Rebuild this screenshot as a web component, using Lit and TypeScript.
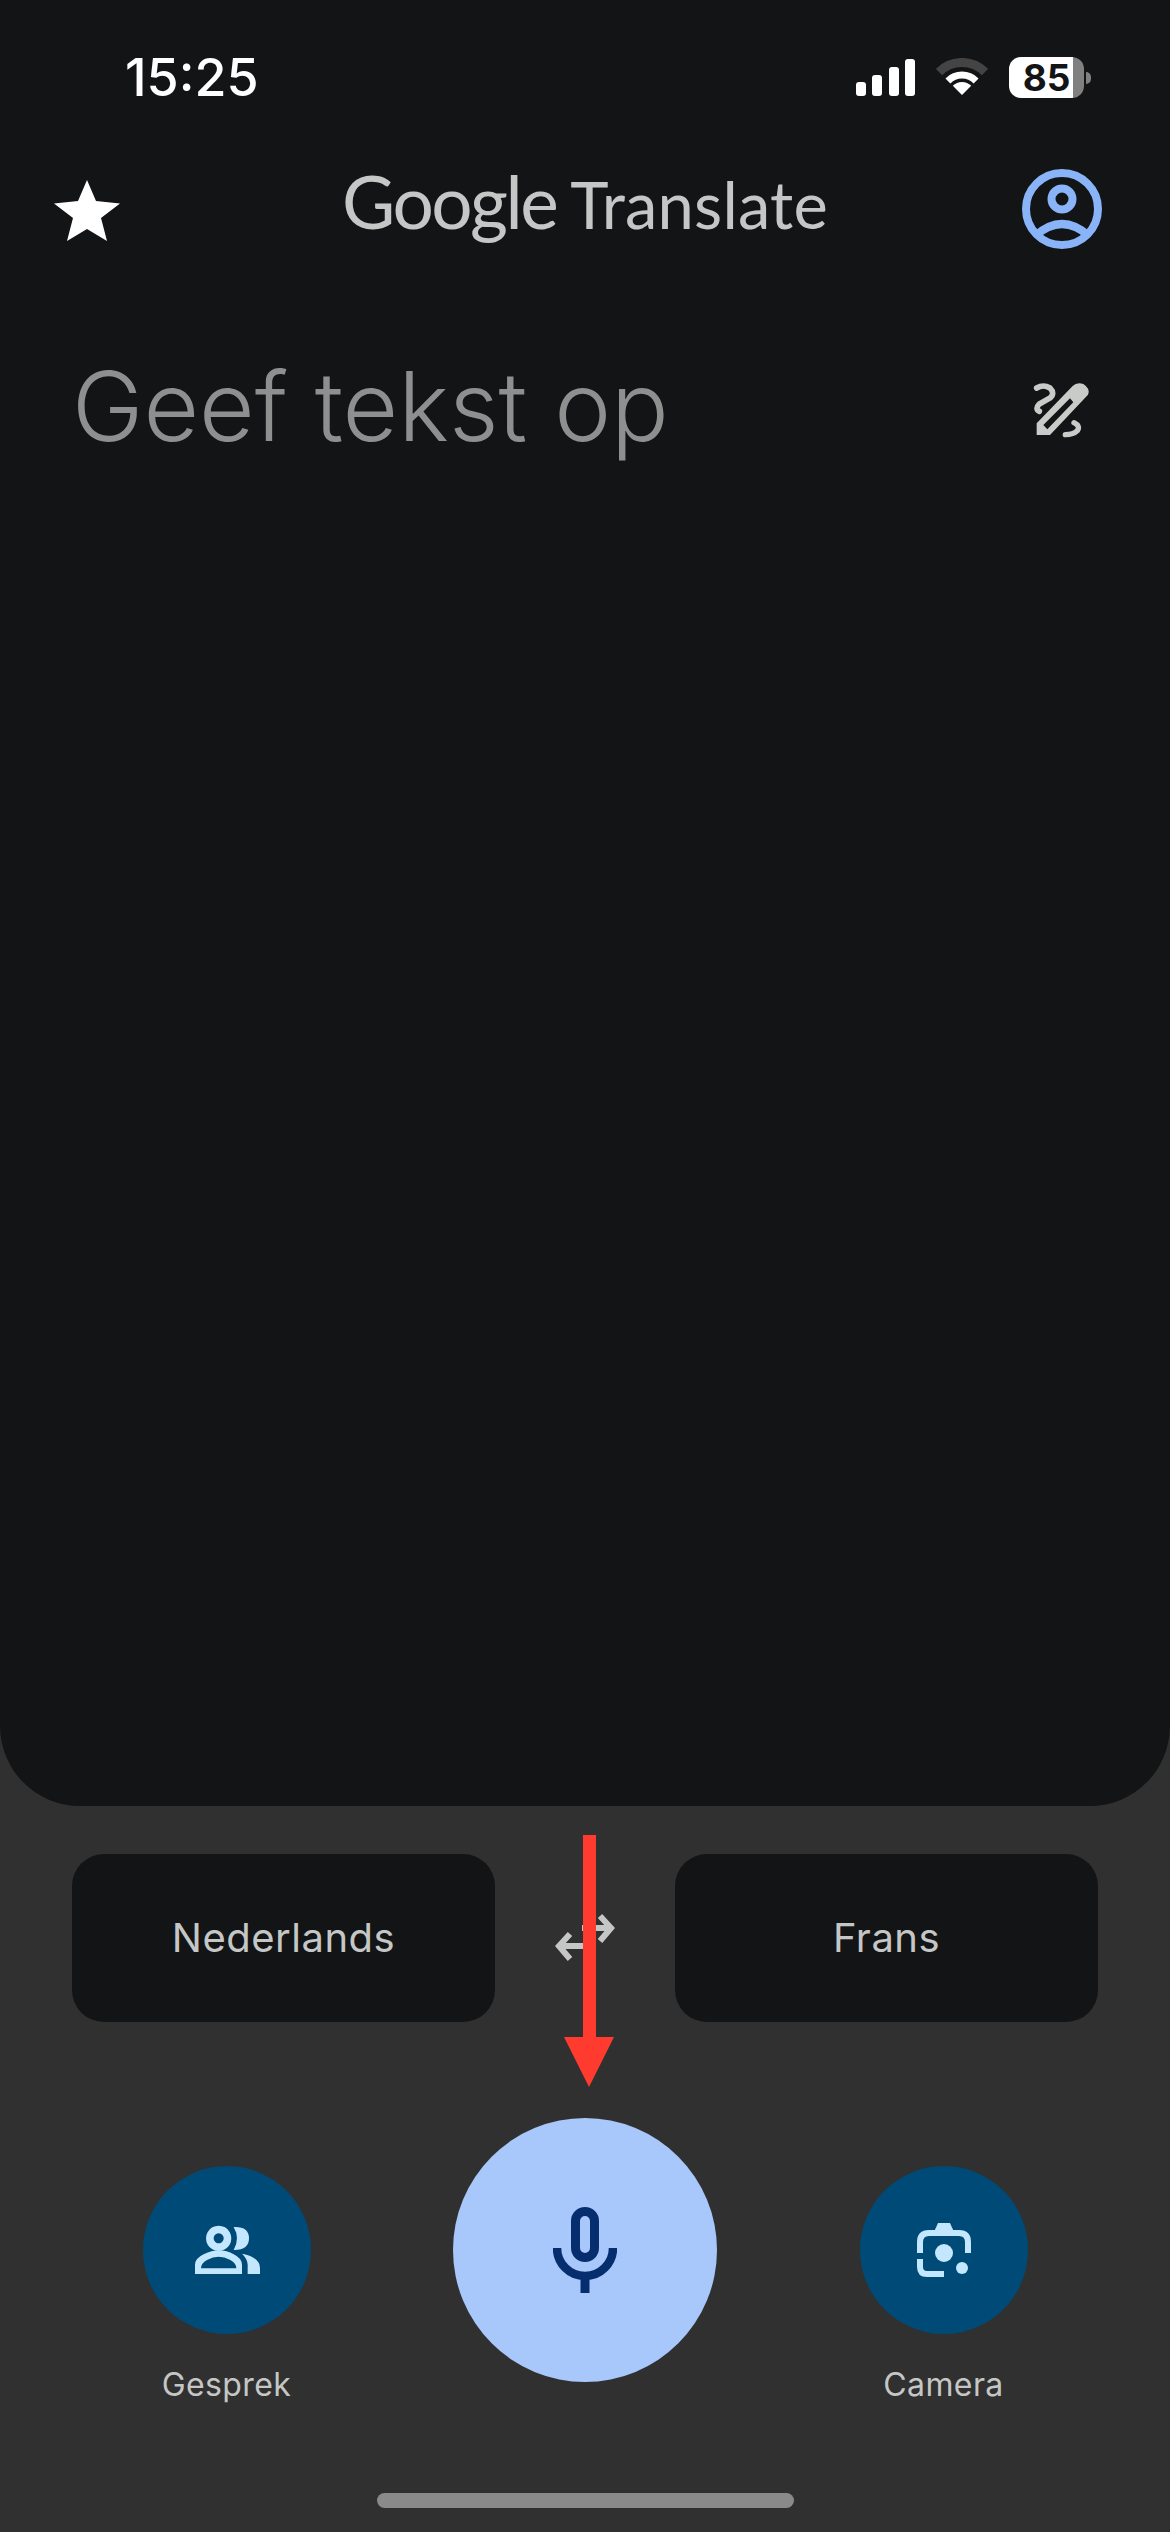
import { LitElement, css, html, svg } from "lit";
import { customElement, property } from "lit/decorators.js";

const starIcon = svg`<polygon fill="#fff" points="33,0 42,21 66,23.5 47,38 53,61 33,49 13,61 19,38 0,23.5 24,21" />`;

const wifiIcon = svg`
  <path d="M3 14A32.5 32.5 0 0 1 49 14" fill="none" stroke="#444" stroke-width="9" />
  <path d="M11.9 22.9A20 20 0 0 1 40.1 22.9" fill="none" stroke="#fff" stroke-width="7" />
  <path d="M26 37L16.8 27.8A13 13 0 0 1 35.2 27.8Z" fill="#fff" />
`;

const penIcon = svg`
  <path fill="#c9cbc9" fill-rule="evenodd" d="M50 160L158 48Q170 36 190 42Q212 56 204 74L90 195H50ZM70 165L82 178L160 97L150 85Z" />
  <path fill="none" stroke="#c9cbc9" stroke-width="17" stroke-linecap="round" d="M50 54Q70 42 90 54Q106 70 90 84L58 102Q44 116 58 124" />
  <path fill="none" stroke="#c9cbc9" stroke-width="16" stroke-linecap="round" d="M162 158Q182 168 172 182Q160 194 136 194" />
`;

const swapIcon = svg`
  <g fill="none" stroke="#c4c7c5" stroke-width="6">
    <path d="M29 33H6M16 21L5 33L16 46" />
    <path d="M28 15H56M46 3L57 15L46 28" />
  </g>
`;

const peopleIcon = svg`
  <g fill="#c2e7ff">
    <path fill-rule="evenodd" d="M95 32a38 38 0 1 0 .01 0ZM95 55a15 15 0 1 1-.01 0Z" />
    <path d="M140 36Q186 34 186 70Q186 106 140 105Q160 70 140 36Z" />
    <path fill-rule="evenodd" d="M24 177V150Q24 130 50 118Q75 106 95 106Q120 106 140 118Q165 130 165 150V177ZM42 160H148Q148 145 130 135Q112 125 95 125Q78 125 60 135Q42 145 42 160Z" />
    <path d="M165 116Q219 126 219 160V177H182V150Q182 132 165 116Z" />
  </g>
`;

const cameraIcon = svg`
  <g fill="none" stroke="#c2e7ff" stroke-width="6">
    <path d="M3 30V19Q3 10 12 10H42Q51 10 51 19V30" />
    <path d="M3 36V44Q3 51 10 51H27" />
  </g>
  <g fill="#c2e7ff">
    <path d="M17 9L21 0H33L37 9Z" />
    <circle cx="27" cy="30" r="9" />
    <circle cx="45" cy="45" r="6" />
  </g>
`;

@customElement("action-button")
export class ActionButton extends LitElement {
  @property() label = "";

  render() {
    return html`
      <div class="circle"><slot></slot></div>
      <div class="label">${this.label}</div>
    `;
  }

  static styles = css`
    :host {
      display: flex;
      flex-direction: column;
      align-items: center;
      width: 240px;
      margin-top: 48px;
    }

    .circle {
      display: flex;
      align-items: center;
      justify-content: center;
      width: 168px;
      height: 168px;
      border-radius: 50%;
      background: #004a77;
    }

    .label {
      margin-top: 31px;
      font: 400 32px/40px Inter, sans-serif;
      letter-spacing: 0.4px;
      color: #c4c7c5;
    }
  `;
}

@customElement("app-root")
export class AppRoot extends LitElement {
  @property({ type: Number }) battery = 85;

  render() {
    return html`
      <div class="panel">
        <div class="status">
          <div class="time">15:25</div>
          <div class="indicators">
            <div class="signal">
              ${[14, 21, 29, 37].map(
                (h) => html`<span class="bar" style="height: ${h}px"></span>`
              )}
            </div>
            <svg width="52" height="40" viewBox="0 0 52 40">${wifiIcon}</svg>
            <div class="battery">
              <div
                class="cell"
                style="background: linear-gradient(90deg, #fff ${this.battery}%, #808080 ${this.battery}%)"
              >
                ${this.battery}
              </div>
              <div class="cap"></div>
            </div>
          </div>
        </div>

        <div class="header">
          <svg class="star" width="66" height="62" viewBox="0 0 66 62">${starIcon}</svg>
          <div class="logo"><span class="google">Google</span><span class="translate">Translate</span></div>
          <svg class="avatar" width="80" height="80" viewBox="0 0 80 80">
            <g fill="none" stroke="#8ab4f8" stroke-width="8">
              <circle cx="40" cy="40" r="36" />
              <circle cx="40" cy="30" r="10.5" />
              <path d="M13 67Q40 43 67 67" />
            </g>
          </svg>
        </div>

        <div class="input">
          <div class="placeholder">Geef tekst op</div>
          <svg width="80" height="80" viewBox="0 0 240 240">${penIcon}</svg>
        </div>
      </div>

      <div class="languages">
        <div class="lang">Nederlands</div>
        <svg width="62" height="50" viewBox="0 0 62 50">${swapIcon}</svg>
        <div class="lang">Frans</div>
      </div>

      <div class="actions">
        <action-button label="Gesprek">
          <svg width="80" height="70" viewBox="0 0 240 210">${peopleIcon}</svg>
        </action-button>
        <div class="mic">
          <svg width="64" height="86" viewBox="0 0 64 86">
            <g fill="none" stroke="#062e6f">
              <rect x="22.5" y="4.5" width="19" height="46" rx="9.5" stroke-width="9" />
              <path d="M4 41A28 28 0 0 0 60 41" stroke-width="8.5" />
            </g>
            <rect x="27.5" y="70" width="9" height="16" fill="#062e6f" />
          </svg>
        </div>
        <action-button label="Camera">
          <svg width="54" height="54" viewBox="0 0 54 54">${cameraIcon}</svg>
        </action-button>
      </div>

      <div class="home"></div>

      <svg class="annotation" width="50" height="252" viewBox="0 0 50 252">
        <rect x="19" y="0" width="13" height="204" fill="#ff3b30" />
        <polygon points="0,202 50,202 25,252" fill="#ff3b30" />
      </svg>
    `;
  }

  static styles = css`
    :host {
      display: flex;
      flex-direction: column;
      position: relative;
      width: 1170px;
      height: 2532px;
      overflow: hidden;
      background: #303030;
    }

    .panel {
      height: 1806px;
      flex: none;
      box-sizing: border-box;
      padding-top: 57px;
      border-radius: 0 0 80px 80px;
      background: #131416;
    }

    .status {
      display: flex;
      align-items: center;
      justify-content: space-between;
      height: 41px;
      padding: 0 79px 0 125px;
    }

    .time {
      font: 500 52px/43px Inter, sans-serif;
      color: #fff;
    }

    .indicators {
      display: flex;
      align-items: center;
      gap: 21px;
    }

    .signal {
      display: flex;
      align-items: flex-end;
      gap: 6.5px;
      height: 37px;
    }

    .bar {
      width: 10px;
      border-radius: 3px;
      background: #fff;
    }

    .battery {
      display: flex;
      align-items: center;
      gap: 2px;
    }

    .cell {
      display: flex;
      align-items: center;
      justify-content: center;
      width: 75px;
      height: 41px;
      border-radius: 12px;
      font: 700 37px/41px Inter, sans-serif;
      color: #131416;
    }

    .cap {
      width: 5px;
      height: 12px;
      border-radius: 0 6px 6px 0;
      background: #808080;
    }

    .header {
      display: grid;
      grid-template-columns: 1fr auto 1fr;
      align-items: center;
      height: 80px;
      margin-top: 69px;
      padding: 0 68px;
    }

    .star {
      margin-left: -14px;
      margin-top: 4px;
    }

    .avatar {
      justify-self: end;
    }

    .logo {
      display: flex;
      align-items: baseline;
      gap: 14px;
      margin-bottom: 12px;
      color: #c4c7c5;
      font-family: Lato, sans-serif;
    }

    .google {
      font-size: 73px;
      line-height: 68px;
      letter-spacing: -2.5px;
    }

    .translate {
      font-size: 65px;
      line-height: 68px;
      letter-spacing: 0.2px;
    }

    .input {
      display: flex;
      align-items: center;
      justify-content: space-between;
      margin-top: 108px;
      padding: 0 70px 0 72px;
    }

    .placeholder {
      padding-bottom: 8px;
      font: 350 96px/102px Inter, sans-serif;
      color: #8e9090;
    }

    .languages {
      display: flex;
      align-items: center;
      justify-content: space-between;
      margin-top: 48px;
      padding: 0 72px;
    }

    .lang {
      display: flex;
      align-items: center;
      justify-content: center;
      width: 423px;
      height: 168px;
      border-radius: 32px;
      font: 400 40px/48px Inter, sans-serif;
      letter-spacing: 0.5px;
      color: #c4c7c5;
      background: #131416;
    }

    .actions {
      display: flex;
      align-items: flex-start;
      gap: 106.5px;
      margin-top: 96px;
      padding-left: 106.5px;
    }

    .mic {
      display: flex;
      align-items: center;
      justify-content: center;
      width: 264px;
      height: 264px;
      border-radius: 50%;
      background: #a8c7fa;
    }

    .home {
      width: 417px;
      height: 15px;
      margin: auto auto 24px;
      border-radius: 8px;
      background: #8a8a8a;
    }

    .annotation {
      position: absolute;
      left: 564px;
      top: 1835px;
    }
  `;
}
